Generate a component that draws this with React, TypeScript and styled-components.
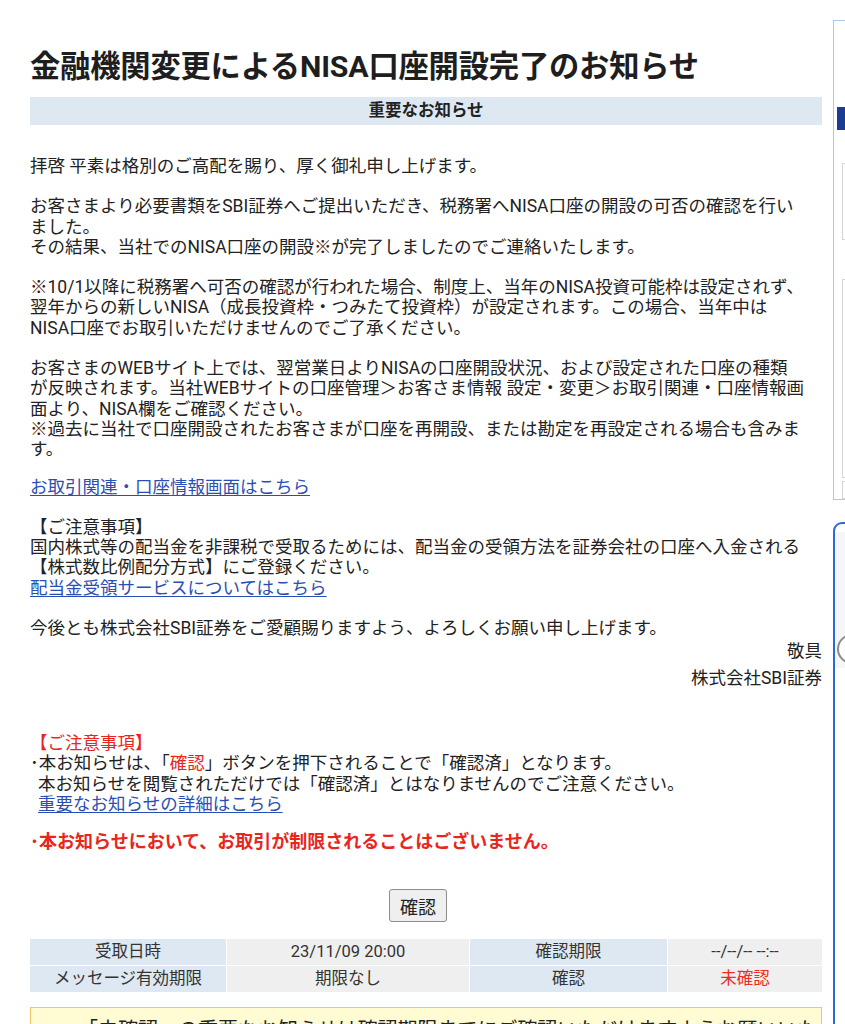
import React from 'react';
import styled, { createGlobalStyle } from 'styled-components';

const GlobalStyle = createGlobalStyle`
  html, body {
    margin: 0;
    padding: 0;
    background: #ffffff;
    overflow: hidden;
  }
  body {
    font-family: Roboto, "Noto Sans CJK JP", sans-serif;
    color: #222222;
  }
`;

const Page = styled.div`
  display: flex;
  align-items: flex-start;
  width: 1100px;
`;

const Main = styled.main`
  flex: 0 0 792px;
  margin-left: 30px;
`;

const Title = styled.h1`
  margin: 0;
  padding-top: 49px;
  font-size: 30.3px;
  line-height: 36px;
  font-weight: 700;
  color: #1e1e1e;
  letter-spacing: -0.2px;
`;

const Band = styled.div`
  margin-top: 12px;
  height: 28px;
  line-height: 28px;
  background: #dde8f2;
  text-align: center;
  font-size: 16.5px;
  font-weight: 700;
  color: #222;
`;

const Body = styled.div`
  padding-top: 31px;
  font-size: 17.5px;
  line-height: 20.3px;
`;

const Para = styled.p<{ $gap?: number; $right?: boolean; $red?: boolean; $bold?: boolean }>`
  margin: ${(p) => (p.$gap ?? 20)}px 0 0;
  text-align: ${(p) => (p.$right ? 'right' : 'left')};
  color: ${(p) => (p.$red ? '#e8261c' : 'inherit')};
  font-weight: ${(p) => (p.$bold ? 700 : 400)};
  font-size: ${(p) => (p.$bold ? '18px' : 'inherit')};
  &:first-child {
    margin-top: 0;
  }
`;

const TextLink = styled.a`
  color: #2a4fb4;
  text-decoration: underline;
  text-underline-offset: 2px;
  cursor: pointer;
`;

const Red = styled.span`
  color: #e8261c;
`;

const Indent = styled.span`
  display: block;
  padding-left: 8px;
`;

const ButtonRow = styled.div`
  display: flex;
  justify-content: center;
  margin-top: 37px;
  padding-right: 16px;
`;

const ConfirmButton = styled.button`
  font-family: inherit;
  font-size: 18px;
  height: 33px;
  padding: 0 10px;
  background: #efefef;
  border: 1px solid #8d8d8d;
  border-radius: 3px;
  color: #222;
`;

const InfoTable = styled.div`
  display: grid;
  grid-template-columns: 196px 242px 197px 1fr;
  gap: 1px;
  margin-top: 17px;
  font-size: 16.5px;
`;

const Cell = styled.div<{ $label?: boolean; $alert?: boolean }>`
  height: 26px;
  line-height: 26px;
  text-align: center;
  background: ${(p) => (p.$label ? '#dde8f2' : '#efefef')};
  color: ${(p) => (p.$alert ? '#f02a20' : '#333')};
`;

const Notice = styled.div`
  margin-top: 15px;
  border: 1px solid #f5c36e;
  background: #fffbd3;
  padding: 8px 0 0 47px;
  font-size: 20px;
  line-height: 28px;
  color: #222;
`;

const Sidebar = styled.aside`
  flex: 0 0 220px;
  margin-left: 11px;
  display: flex;
  flex-direction: column;
  gap: 22px;
  padding-top: 20px;
`;

const LoginPanel = styled.section`
  height: 480px;
  border: 1px solid #a9c7ef;
  box-sizing: border-box;
  padding: 86px 0 0 3px;
  display: flex;
  flex-direction: column;
`;

const PanelBar = styled.div`
  height: 23px;
  background: #1b3b94;
`;

const InputBox = styled.div<{ $h: number; $top: number }>`
  margin: ${(p) => p.$top}px 0 0 5px;
  height: ${(p) => p.$h}px;
  border: 1px solid #d6d6d6;
  border-right: none;
`;

const MenuPanel = styled.section`
  height: 600px;
  border: 2px solid #2f68d6;
  border-radius: 9px 0 0 0;
  padding-top: 8px;
  box-sizing: border-box;
`;

const MenuHead = styled.div`
  height: 132px;
  background: #f4f6f9;
  display: flex;
  align-items: flex-end;
  padding: 0 0 4px 2px;
`;

const Knob = styled.div`
  width: 26px;
  height: 26px;
  border-radius: 50%;
  border: 2px solid #8a8a8a;
  background: #fff;
`;

export default function App() {
  return (
    <>
      <GlobalStyle />
      <Page>
        <Main>
          <Title>金融機関変更によるNISA口座開設完了のお知らせ</Title>
          <Band>重要なお知らせ</Band>
          <Body>
            <Para>拝啓 平素は格別のご高配を賜り、厚く御礼申し上げます。</Para>
            <Para>
              お客さまより必要書類をSBI証券へご提出いただき、税務署へNISA口座の開設の可否の確認を行い
              <br />
              ました。
              <br />
              その結果、当社でのNISA口座の開設※が完了しましたのでご連絡いたします。
            </Para>
            <Para>
              ※10/1以降に税務署へ可否の確認が行われた場合、制度上、当年のNISA投資可能枠は設定されず、
              <br />
              翌年からの新しいNISA（成長投資枠・つみたて投資枠）が設定されます。この場合、当年中は
              <br />
              NISA口座でお取引いただけませんのでご了承ください。
            </Para>
            <Para>
              お客さまのWEBサイト上では、翌営業日よりNISAの口座開設状況、および設定された口座の種類
              <br />
              が反映されます。当社WEBサイトの口座管理＞お客さま情報 設定・変更＞お取引関連・口座情報画
              <br />
              面より、NISA欄をご確認ください。
              <br />
              ※過去に当社で口座開設されたお客さまが口座を再開設、または勘定を再設定される場合も含みま
              <br />
              す。
            </Para>
            <Para $gap={17}>
              <TextLink>お取引関連・口座情報画面はこちら</TextLink>
            </Para>
            <Para>
              【ご注意事項】
              <br />
              国内株式等の配当金を非課税で受取るためには、配当金の受領方法を証券会社の口座へ入金される
              <br />
              【株式数比例配分方式】にご登録ください。
              <br />
              <TextLink>配当金受領サービスについてはこちら</TextLink>
            </Para>
            <Para>今後とも株式会社SBI証券をご愛顧賜りますよう、よろしくお願い申し上げます。</Para>
            <Para $gap={3} $right>敬具</Para>
            <Para $gap={6} $right>株式会社SBI証券</Para>
            <Para $gap={45}>
              <Red>【ご注意事項】</Red>
              <br />
              ･本お知らせは、「<Red>確認</Red>」ボタンを押下されることで「確認済」となります。
              <Indent>
                本お知らせを閲覧されただけでは「確認済」とはなりませんのでご注意ください。
                <br />
                <TextLink>重要なお知らせの詳細はこちら</TextLink>
              </Indent>
            </Para>
            <Para $gap={18} $red $bold>
              ･本お知らせにおいて、お取引が制限されることはございません。
            </Para>
          </Body>
          <ButtonRow>
            <ConfirmButton type="button">確認</ConfirmButton>
          </ButtonRow>
          <InfoTable>
            <Cell $label>受取日時</Cell>
            <Cell>23/11/09 20:00</Cell>
            <Cell $label>確認期限</Cell>
            <Cell>--/--/-- --:--</Cell>
            <Cell $label>メッセージ有効期限</Cell>
            <Cell>期限なし</Cell>
            <Cell $label>確認</Cell>
            <Cell $alert>未確認</Cell>
          </InfoTable>
          <Notice>「未確認」の重要なお知らせは確認期限までにご確認いただけますようお願いいたします。</Notice>
        </Main>
        <Sidebar>
          <LoginPanel>
            <PanelBar />
            <InputBox $top={33} $h={76} />
            <InputBox $top={39} $h={200} />
            <InputBox $top={3} $h={16} />
          </LoginPanel>
          <MenuPanel>
            <MenuHead>
              <Knob />
            </MenuHead>
          </MenuPanel>
        </Sidebar>
      </Page>
    </>
  );
}
